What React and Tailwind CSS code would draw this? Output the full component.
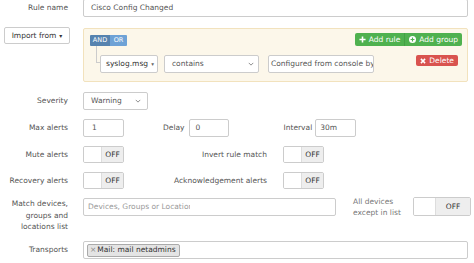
function Toggle({ w = 41, on = 17 }) {
  return (
    <div
      className="flex h-[17px] shrink-0 overflow-hidden rounded-[2px] border border-[#ccc] bg-white"
      style={{ width: w }}
    >
      <div className="h-full bg-white" style={{ width: on }} />
      <div className="flex flex-1 items-center justify-center border-l border-[#ddd] bg-[#eee] text-[#333]">
        OFF
      </div>
    </div>
  );
}

function Chevron({ className = "" }) {
  return (
    <svg viewBox="0 0 8 5" className={"h-[4px] w-[6px] " + className}>
      <path d="M1 1l3 3 3-3" fill="none" stroke="#777" strokeWidth="1.1" />
    </svg>
  );
}

export default function App() {
  const box = "h-[18px] shrink-0 rounded-[2px] border border-[#ccc] bg-white flex items-center";
  return (
    <div className="h-[263px] w-[474px] overflow-hidden bg-white font-['DejaVu_Sans',sans-serif] text-[7.5px] text-[#555]">
      {/* Rule name */}
      <div className="mt-[-1px] flex items-center">
        <div className="w-[68px] text-right text-[#555]">Rule name</div>
        <div className={box + " ml-[15px] w-[385px] pl-[7px] text-[#555]"}>Cisco Config Changed</div>
      </div>

      {/* Import / builder */}
      <div className="mt-[10px] flex items-start">
        <div className="ml-[4px] flex h-[17px] w-[66px] items-center justify-center gap-[3px] rounded-[2px] border border-[#ccc] bg-white text-[#333]">
          Import from <span className="text-[6px]">▾</span>
        </div>
        <div className="ml-[13px] mt-px h-[54px] w-[385px] rounded-[2px] border border-[#f2e2bd] bg-[#fcf7ea]">
          <div className="flex items-start justify-between pl-[6px] pr-[5px] pt-[4px]">
            <div className="mt-[2px] flex h-[11px] overflow-hidden rounded-[1px] text-[6.5px] text-white">
              <div className="flex w-[20px] items-center justify-center bg-[#5683af]">AND</div>
              <div className="flex w-[17px] items-center justify-center bg-[#6ea2d6]">OR</div>
            </div>
            <div className="flex h-[13px] overflow-hidden rounded-[2px] bg-[#4fb14f] text-white">
              <div className="flex items-center gap-[3px] border-r border-[#44a044] px-[4px]">
                <svg viewBox="0 0 8 8" className="h-[7px] w-[7px]">
                  <path d="M4 0.5v7M0.5 4h7" stroke="white" strokeWidth="1.8" />
                </svg>
                Add rule
              </div>
              <div className="flex items-center gap-[3px] px-[4px]">
                <svg viewBox="0 0 8 8" className="h-[7px] w-[7px]">
                  <circle cx="4" cy="4" r="4" fill="white" />
                  <path d="M4 1.8v4.4M1.8 4h4.4" stroke="#4fb14f" strokeWidth="1.3" />
                </svg>
                Add group
              </div>
            </div>
          </div>
          <div className="flex items-start">
            <div className="ml-[12px] h-[17px] w-[4px] border-b border-l border-[#ccc]" />
            <div className="mt-[9px] flex items-center">
              <div className={box + " w-[58px] justify-between pl-[5px] pr-[3px] text-[#333]"}>
                syslog.msg <span className="text-[5.5px] text-[#666]">▾</span>
              </div>
              <div className={box + " ml-[6px] w-[95px] justify-between pl-[7px] pr-[4px] text-[#555]"}>
                contains <Chevron />
              </div>
              <div className={box + " ml-[9px] w-[106px] overflow-hidden whitespace-nowrap pl-[2px] text-[#555]"}>
                Configured from console by
              </div>
            </div>
            <div className="ml-auto mr-[9px] mt-[9px] flex h-[11px] items-center gap-[3px] rounded-[2px] bg-[#d9534f] px-[4px] text-white">
              <svg viewBox="0 0 8 8" className="h-[6px] w-[6px]">
                <path d="M1.2 1.2l5.6 5.6M6.8 1.2l-5.6 5.6" stroke="white" strokeWidth="2" />
              </svg>
              Delete
            </div>
          </div>
        </div>
      </div>

      {/* Severity */}
      <div className="mt-[10px] flex items-center">
        <div className="w-[68px] text-right">Severity</div>
        <div className={box + " ml-[15px] w-[65px] justify-between pl-[7px] pr-[6px] text-[#555]"}>
          Warning <Chevron />
        </div>
      </div>

      {/* Max alerts */}
      <div className="mt-[9px] flex items-center">
        <div className="w-[68px] text-right">Max alerts</div>
        <div className={box + " ml-[15px] w-[41px] pl-[8px]"}>1</div>
        <div className="ml-[39px]">Delay</div>
        <div className={box + " ml-[4px] w-[40px] pl-[6px]"}>0</div>
        <div className="ml-[55px]">Interval</div>
        <div className={box + " ml-[3px] w-[41px] pl-[4px]"}>30m</div>
      </div>

      {/* Mute */}
      <div className="mt-[9px] flex items-center">
        <div className="w-[68px] text-right">Mute alerts</div>
        <div className="ml-[15px]">
          <Toggle />
        </div>
        <div className="w-[143px] text-right">Invert rule match</div>
        <div className="ml-[16px]">
          <Toggle />
        </div>
      </div>

      {/* Recovery */}
      <div className="mt-[9px] flex items-center">
        <div className="w-[68px] text-right">Recovery alerts</div>
        <div className="ml-[15px]">
          <Toggle />
        </div>
        <div className="w-[143px] text-right">Acknowledgement alerts</div>
        <div className="ml-[16px]">
          <Toggle />
        </div>
      </div>

      {/* Match devices */}
      <div className="mt-[9px] flex h-[35px] items-start">
        <div className="w-[68px] text-right leading-[11.5px]">
          Match devices,
          <br />
          groups and
          <br />
          locations list
        </div>
        <div className={box + " ml-[15px] w-[253px] pl-[4px]"}>
          <span className="w-[102px] shrink-0 overflow-hidden whitespace-nowrap text-[#999]">Devices, Groups or Location</span>
        </div>
        <div className="ml-[17px] mt-[-1px] w-[60px] leading-[10.5px] text-[#777]">
          All devices
          <br />
          except in list
        </div>
        <div className="mt-[-1px]">
          <div className="flex h-[19px] w-[58px] overflow-hidden rounded-[2px] border border-[#ccc] bg-white">
            <div className="h-full w-[21px] bg-white" />
            <div className="flex flex-1 items-center justify-center border-l border-[#ddd] bg-[#eee] text-[#333]">
              OFF
            </div>
          </div>
        </div>
      </div>

      {/* Transports */}
      <div className="mt-[8px] flex items-center">
        <div className="w-[68px] text-right">Transports</div>
        <div className={box + " ml-[15px] w-[385px] pl-[3px]"}>
          <div className="flex h-[13px] items-center rounded-[2px] border border-[#aaa] bg-[#e4e4e4] pl-[2px] pr-[3px] text-[#333]">
            <span className="mr-[1px] text-[#888]">×</span>Mail: mail netadmins
          </div>
        </div>
      </div>
    </div>
  );
}
